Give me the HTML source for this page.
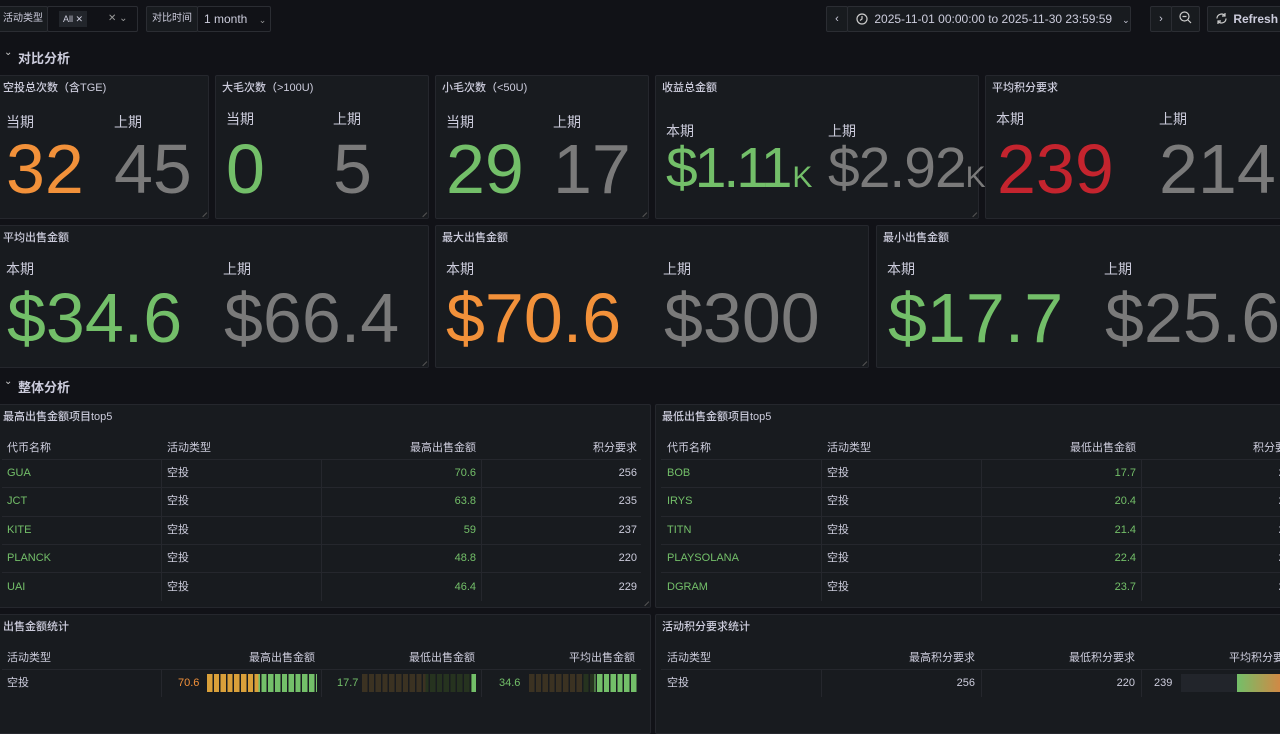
<!DOCTYPE html>
<html><head><meta charset="utf-8"><style>
*{box-sizing:border-box;margin:0;padding:0}
body{width:1280px;height:720px;overflow:hidden;background:#111217;font-family:"Liberation Sans","Noto Sans CJK SC",sans-serif;color:#ccccdc;position:relative}
.a{position:absolute;white-space:nowrap}
.p{position:absolute;background:#181b1f;border:1px solid #25272d;border-radius:2px}
.t{position:absolute;font-size:11px;line-height:14px;color:#ccccdc;font-weight:500}
.lb{position:absolute;font-size:14px;color:#ccccdc;line-height:16px}
.v{position:absolute;font-size:70px;line-height:70px;letter-spacing:0}
.box{position:absolute;height:26px;border:1px solid #2b2d33;border-radius:2px;background:#111217;font-size:11px;line-height:24px;white-space:nowrap;overflow:hidden}
.th{position:absolute;font-size:11px;line-height:14px;color:#ccccdc}
.td{position:absolute;font-size:11px;line-height:14px;color:#ccccdc}
.g{color:#73bf69}.o{color:#f2913a}.gr{color:#7a7a7a}.r{color:#c4242e}
.hl{position:absolute;height:1px;background:#25272d}
.vl{position:absolute;width:1px;background:#25272d}
.seg{position:absolute;height:18px}
.seg::after{content:"";position:absolute;inset:0;background:repeating-linear-gradient(90deg,transparent 0 5.3px,#181b1f 5.3px 6.8px)}
.rz{position:absolute;width:6px;height:6px;border-right:1px solid #555;transform:rotate(45deg)}
</style></head><body>

<div class="box" style="left:-2px;top:6px;width:50px;background:#181b1f;padding-left:4px;font-size:10px">活动类型</div>
<div class="box" style="left:47px;top:6px;width:91px"><span class="a" style="left:11px;top:4px;height:16px;line-height:16px;background:#22252b;padding:0 4px;font-size:9px">All ✕</span><span class="a" style="left:60px;top:0;font-size:10px;color:#999">✕ ⌄</span></div>
<div class="box" style="left:146px;top:6px;width:52px;background:#181b1f;padding-left:5px;font-size:10px">对比时间</div>
<div class="box" style="left:197px;top:6px;width:74px;padding-left:6px;font-size:12px">1 month <span style="color:#999;margin-left:8px;font-size:9px">⌄</span></div>

<div class="box" style="left:826px;top:6px;width:22px;background:#181b1f;text-align:center">‹</div>
<div class="box" style="left:847px;top:6px;width:284px;background:#181b1f;padding-left:8px;font-size:12px">
<svg width="12" height="12" viewBox="0 0 12 12" style="vertical-align:-2px"><circle cx="6" cy="6" r="5" fill="none" stroke="#ccc" stroke-width="1.2"/><path d="M6 3v3l-2 1.5" stroke="#ccc" stroke-width="1.2" fill="none"/></svg>
<span style="margin-left:3px">2025-11-01 00:00:00 to 2025-11-30 23:59:59</span><span style="margin-left:10px;font-size:9px">⌄</span></div>
<div class="box" style="left:1150px;top:6px;width:22px;background:#181b1f;text-align:center">›</div>
<div class="box" style="left:1171px;top:6px;width:29px;background:#181b1f;text-align:center"><svg width="13" height="13" viewBox="0 0 13 13" style="vertical-align:-2px"><circle cx="5.5" cy="5.5" r="4.5" fill="none" stroke="#ccc" stroke-width="1.2"/><path d="M3.5 5.5h4M9 9l3 3" stroke="#ccc" stroke-width="1.2"/></svg></div>
<div class="box" style="left:1207px;top:6px;width:80px;background:#181b1f;padding-left:7px;font-weight:bold;font-size:12px"><svg width="13" height="13" viewBox="0 0 13 13" style="vertical-align:-2px"><path d="M2 6.5a4.5 4.5 0 0 1 8-2.8M11 6.5a4.5 4.5 0 0 1-8 2.8M10 1v3H7M3 12V9h3" fill="none" stroke="#ccc" stroke-width="1.2"/></svg> <span style="margin-left:2px">Refresh</span></div>

<div class="a" style="left:4px;top:47px;font-size:10px;color:#ccc">⌄</div>
<div class="a" style="left:18px;top:48px;font-size:13px;font-weight:bold">对比分析</div>

<div class="p" style="left:-10px;top:75px;width:219px;height:144px"></div>
<div class="t" style="left:3px;top:81px">空投总次数（含TGE)</div>
<div class="lb" style="left:6px;top:114px">当期</div><div class="lb" style="left:114px;top:114px">上期</div>
<div class="v o" style="left:6px;top:134px">32</div><div class="v gr" style="left:114px;top:134px">45</div>

<div class="p" style="left:215px;top:75px;width:214px;height:144px"></div>
<div class="t" style="left:222px;top:81px">大毛次数（>100U)</div>
<div class="lb" style="left:226px;top:111px">当期</div><div class="lb" style="left:333px;top:111px">上期</div>
<div class="v g" style="left:226px;top:134px">0</div><div class="v gr" style="left:333px;top:134px">5</div>

<div class="p" style="left:435px;top:75px;width:214px;height:144px"></div>
<div class="t" style="left:442px;top:81px">小毛次数（<50U)</div>
<div class="lb" style="left:446px;top:114px">当期</div><div class="lb" style="left:553px;top:114px">上期</div>
<div class="v g" style="left:446px;top:134px">29</div><div class="v gr" style="left:553px;top:134px">17</div>

<div class="p" style="left:655px;top:75px;width:324px;height:144px"></div>
<div class="t" style="left:662px;top:81px">收益总金额</div>
<div class="lb" style="left:666px;top:123px">本期</div><div class="lb" style="left:828px;top:123px">上期</div>
<div class="v g" style="left:666px;top:140px;font-size:57px;line-height:57px;letter-spacing:-3px">$1.11<span style="font-size:30px;letter-spacing:0;margin-left:3px">K</span></div>
<div class="v gr" style="left:828px;top:140px;font-size:57px;line-height:57px;letter-spacing:-1px">$2.92<span style="font-size:30px;letter-spacing:0">K</span></div>

<div class="p" style="left:985px;top:75px;width:310px;height:144px"></div>
<div class="t" style="left:992px;top:81px">平均积分要求</div>
<div class="lb" style="left:996px;top:111px">本期</div><div class="lb" style="left:1159px;top:111px">上期</div>
<div class="v r" style="left:997px;top:134px">239</div><div class="v gr" style="left:1159px;top:134px">214</div>

<div class="p" style="left:-10px;top:225px;width:439px;height:143px"></div>
<div class="t" style="left:3px;top:231px">平均出售金额</div>
<div class="lb" style="left:6px;top:261px">本期</div><div class="lb" style="left:223px;top:261px">上期</div>
<div class="v g" style="left:7px;top:283px">$34.6</div><div class="v gr" style="left:224px;top:283px">$66.4</div>

<div class="p" style="left:435px;top:225px;width:434px;height:143px"></div>
<div class="t" style="left:442px;top:231px">最大出售金额</div>
<div class="lb" style="left:446px;top:261px">本期</div><div class="lb" style="left:663px;top:261px">上期</div>
<div class="v o" style="left:446px;top:283px">$70.6</div><div class="v gr" style="left:664px;top:283px">$300</div>

<div class="p" style="left:876px;top:225px;width:420px;height:143px"></div>
<div class="t" style="left:883px;top:231px">最小出售金额</div>
<div class="lb" style="left:887px;top:261px">本期</div><div class="lb" style="left:1104px;top:261px">上期</div>
<div class="v g" style="left:888px;top:283px">$17.7</div><div class="v gr" style="left:1105px;top:283px">$25.6</div>

<div class="a" style="left:4px;top:376px;font-size:10px;color:#ccc">⌄</div>
<div class="a" style="left:18px;top:377px;font-size:13px;font-weight:bold">整体分析</div>

<div class="p" style="left:-10px;top:404px;width:661px;height:204px"></div>
<div class="t" style="left:3px;top:410px">最高出售金额项目top5</div>
<div class="th" style="left:7px;top:441px">代币名称</div><div class="th" style="left:167px;top:441px">活动类型</div>
<div class="th" style="left:321px;width:155px;text-align:right;top:441px">最高出售金额</div><div class="th" style="left:481px;width:156px;text-align:right;top:441px">积分要求</div>
<div class="hl" style="left:2px;width:639px;top:459px"></div>
<div class="hl" style="left:2px;width:639px;top:487px"></div>
<div class="hl" style="left:2px;width:639px;top:516px"></div>
<div class="hl" style="left:2px;width:639px;top:544px"></div>
<div class="hl" style="left:2px;width:639px;top:572px"></div>
<div class="vl" style="left:161px;top:459px;height:142px"></div>
<div class="vl" style="left:321px;top:459px;height:142px"></div>
<div class="vl" style="left:481px;top:459px;height:142px"></div>

<div class="td g" style="left:7px;top:466px">GUA</div><div class="td" style="left:167px;top:466px">空投</div><div class="td g" style="left:321px;width:155px;text-align:right;top:466px">70.6</div><div class="td" style="left:481px;width:156px;text-align:right;top:466px">256</div>
<div class="td g" style="left:7px;top:494px">JCT</div><div class="td" style="left:167px;top:494px">空投</div><div class="td g" style="left:321px;width:155px;text-align:right;top:494px">63.8</div><div class="td" style="left:481px;width:156px;text-align:right;top:494px">235</div>
<div class="td g" style="left:7px;top:523px">KITE</div><div class="td" style="left:167px;top:523px">空投</div><div class="td g" style="left:321px;width:155px;text-align:right;top:523px">59</div><div class="td" style="left:481px;width:156px;text-align:right;top:523px">237</div>
<div class="td g" style="left:7px;top:551px">PLANCK</div><div class="td" style="left:167px;top:551px">空投</div><div class="td g" style="left:321px;width:155px;text-align:right;top:551px">48.8</div><div class="td" style="left:481px;width:156px;text-align:right;top:551px">220</div>
<div class="td g" style="left:7px;top:580px">UAI</div><div class="td" style="left:167px;top:580px">空投</div><div class="td g" style="left:321px;width:155px;text-align:right;top:580px">46.4</div><div class="td" style="left:481px;width:156px;text-align:right;top:580px">229</div>

<div class="p" style="left:655px;top:404px;width:640px;height:204px"></div>
<div class="t" style="left:662px;top:410px">最低出售金额项目top5</div>
<div class="th" style="left:667px;top:441px">代币名称</div><div class="th" style="left:827px;top:441px">活动类型</div>
<div class="th" style="left:981px;width:155px;text-align:right;top:441px">最低出售金额</div><div class="th" style="left:1141px;width:156px;text-align:right;top:441px">积分要求</div>
<div class="hl" style="left:661px;width:630px;top:459px"></div>
<div class="hl" style="left:661px;width:630px;top:487px"></div>
<div class="hl" style="left:661px;width:630px;top:516px"></div>
<div class="hl" style="left:661px;width:630px;top:544px"></div>
<div class="hl" style="left:661px;width:630px;top:572px"></div>
<div class="vl" style="left:821px;top:459px;height:142px"></div>
<div class="vl" style="left:981px;top:459px;height:142px"></div>
<div class="vl" style="left:1141px;top:459px;height:142px"></div>
<div class="td g" style="left:667px;top:466px">BOB</div><div class="td" style="left:827px;top:466px">空投</div><div class="td g" style="left:981px;width:155px;text-align:right;top:466px">17.7</div><div class="td" style="left:1141px;width:156px;text-align:right;top:466px">256</div>
<div class="td g" style="left:667px;top:494px">IRYS</div><div class="td" style="left:827px;top:494px">空投</div><div class="td g" style="left:981px;width:155px;text-align:right;top:494px">20.4</div><div class="td" style="left:1141px;width:156px;text-align:right;top:494px">235</div>
<div class="td g" style="left:667px;top:523px">TITN</div><div class="td" style="left:827px;top:523px">空投</div><div class="td g" style="left:981px;width:155px;text-align:right;top:523px">21.4</div><div class="td" style="left:1141px;width:156px;text-align:right;top:523px">237</div>
<div class="td g" style="left:667px;top:551px">PLAYSOLANA</div><div class="td" style="left:827px;top:551px">空投</div><div class="td g" style="left:981px;width:155px;text-align:right;top:551px">22.4</div><div class="td" style="left:1141px;width:156px;text-align:right;top:551px">220</div>
<div class="td g" style="left:667px;top:580px">DGRAM</div><div class="td" style="left:827px;top:580px">空投</div><div class="td g" style="left:981px;width:155px;text-align:right;top:580px">23.7</div><div class="td" style="left:1141px;width:156px;text-align:right;top:580px">229</div>

<div class="p" style="left:-10px;top:614px;width:661px;height:120px"></div>
<div class="t" style="left:3px;top:620px">出售金额统计</div>
<div class="th" style="left:7px;top:651px">活动类型</div>
<div class="th" style="left:161px;width:154px;text-align:right;top:651px">最高出售金额</div>
<div class="th" style="left:321px;width:154px;text-align:right;top:651px">最低出售金额</div>
<div class="th" style="left:481px;width:154px;text-align:right;top:651px">平均出售金额</div>
<div class="hl" style="left:2px;width:639px;top:669px"></div>
<div class="vl" style="left:161px;top:669px;height:28px"></div>
<div class="vl" style="left:321px;top:669px;height:28px"></div>
<div class="vl" style="left:481px;top:669px;height:28px"></div>
<div class="td" style="left:7px;top:676px">空投</div>
<div class="td o" style="left:178px;top:676px">70.6</div>
<div class="seg" style="left:207px;top:674px;width:110px;background:linear-gradient(90deg,#d9a03a 0 47%,#73bf69 47%)"></div>
<div class="td g" style="left:337px;top:676px">17.7</div>
<div class="seg" style="left:362px;top:674px;width:115px;background:linear-gradient(90deg,#3b3222 0 55%,#26331f 55% 95%,#73bf69 95%)"></div>
<div class="td g" style="left:499px;top:676px">34.6</div>
<div class="seg" style="left:529px;top:674px;width:109px;background:linear-gradient(90deg,#3b3222 0 50%,#26331f 50% 60%,#73bf69 60%)"></div>

<div class="p" style="left:655px;top:614px;width:640px;height:120px"></div>
<div class="t" style="left:662px;top:620px">活动积分要求统计</div>
<div class="th" style="left:667px;top:651px">活动类型</div>
<div class="th" style="left:821px;width:154px;text-align:right;top:651px">最高积分要求</div>
<div class="th" style="left:981px;width:154px;text-align:right;top:651px">最低积分要求</div>
<div class="th" style="left:1141px;width:154px;text-align:right;top:651px">平均积分要求</div>
<div class="hl" style="left:661px;width:630px;top:669px"></div>
<div class="vl" style="left:821px;top:669px;height:28px"></div>
<div class="vl" style="left:981px;top:669px;height:28px"></div>
<div class="vl" style="left:1141px;top:669px;height:28px"></div>
<div class="td" style="left:667px;top:676px">空投</div>
<div class="td" style="left:821px;width:154px;text-align:right;top:676px">256</div>
<div class="td" style="left:981px;width:154px;text-align:right;top:676px">220</div>
<div class="td" style="left:1154px;top:676px">239</div>
<div class="a" style="left:1181px;top:674px;width:56px;height:18px;background:#22252b"></div>
<div class="a" style="left:1237px;top:674px;width:50px;height:18px;background:linear-gradient(90deg,#73bf69,#e0803f)"></div>

<div class="rz" style="left:200px;top:210px"></div><div class="rz" style="left:420px;top:210px"></div><div class="rz" style="left:640px;top:210px"></div><div class="rz" style="left:970px;top:210px"></div>
<div class="rz" style="left:420px;top:359px"></div><div class="rz" style="left:860px;top:359px"></div><div class="rz" style="left:642px;top:599px"></div>
</body></html>
